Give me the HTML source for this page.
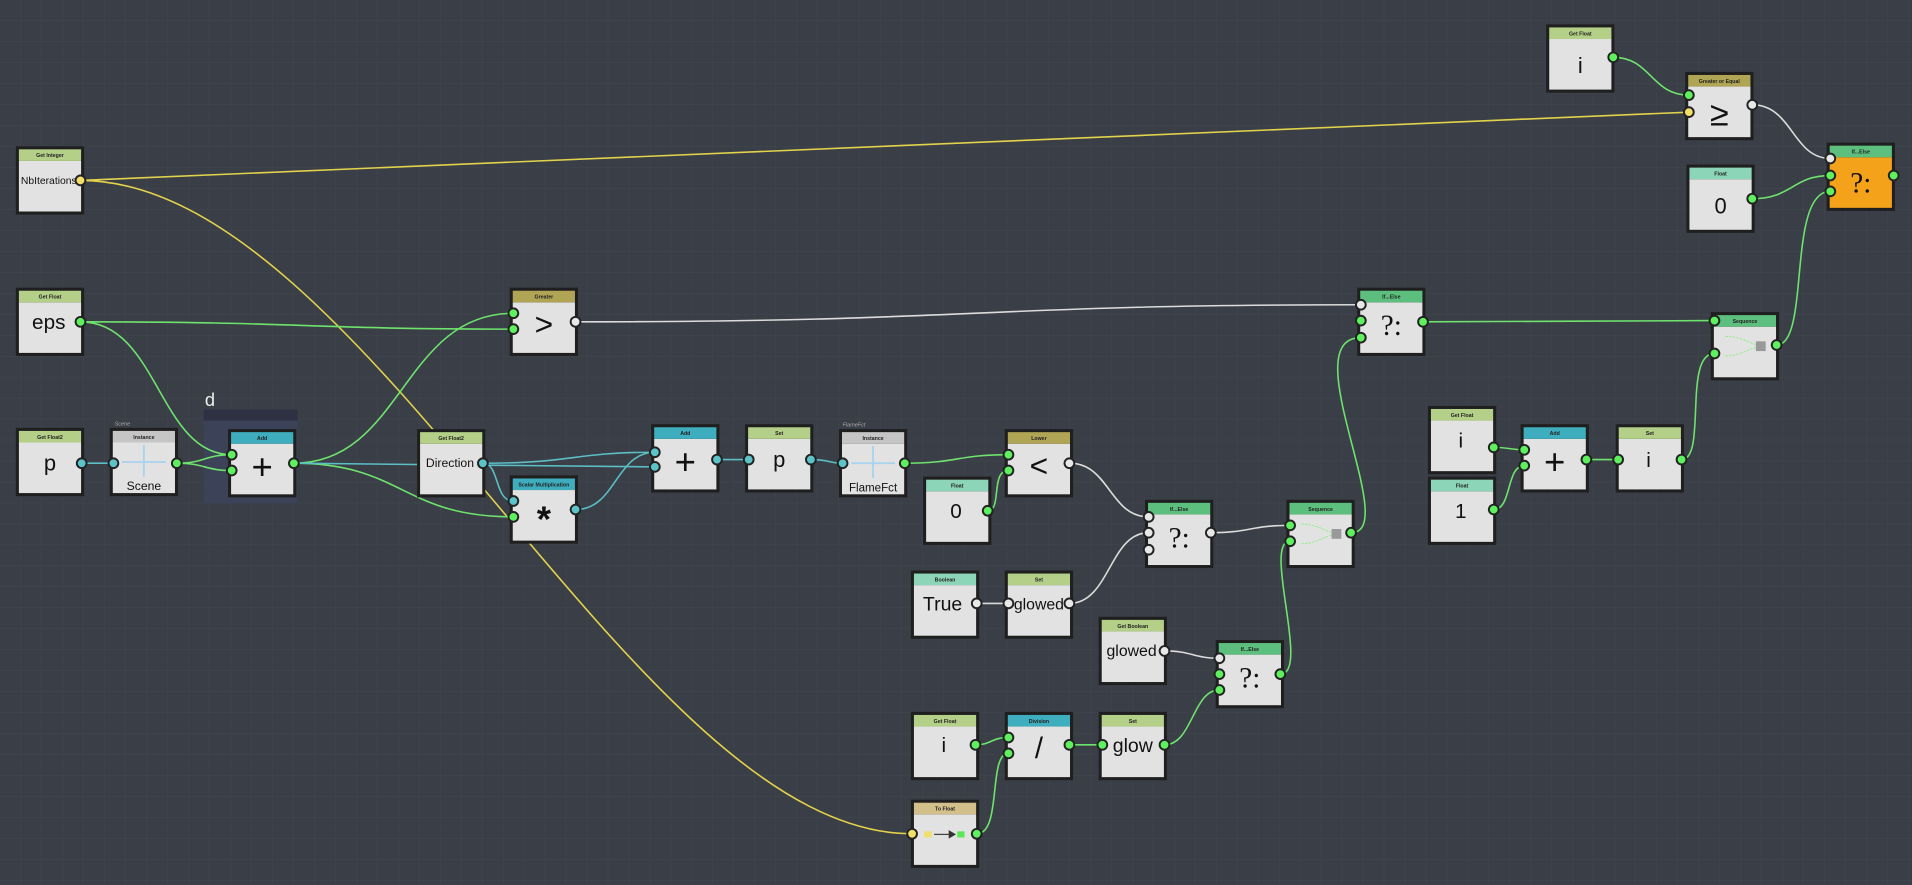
<!DOCTYPE html>
<html><head><meta charset="utf-8"><style>
html,body{margin:0;padding:0;background:#3a3e46;overflow:hidden}
svg{display:block}
.h{font:bold 4.3px "Liberation Sans",sans-serif;fill:#222;text-anchor:middle}
.t{font-family:"Liberation Sans",sans-serif;fill:#111;text-anchor:middle}
.s{font-family:"Liberation Serif",serif;fill:#111;text-anchor:middle}
.w{fill:none;stroke-width:1.3}
.g{stroke:#6ee36e}.y{stroke:#e2d24c}.wh{stroke:#dcdcdc}.tl{stroke:#5cbfc6}
</style></head><body>
<svg width="1912" height="885" viewBox="0 0 1568 726" preserveAspectRatio="none" xmlns="http://www.w3.org/2000/svg">
<defs>
<pattern id="gr" width="17.2" height="17.2" patternUnits="userSpaceOnUse">
<path d="M17.2 0V17.2H0" fill="none" stroke="#42464e" stroke-width="0.8"/>
</pattern>
<g id="n"><rect x="0" y="0" width="56" height="56" fill="#1f1f1f"/><rect x="2.5" y="12" width="51" height="41.5" fill="#e2e2e2"/></g>
</defs>
<rect width="1568" height="726" fill="#3a3e46"/>
<rect width="1568" height="726" fill="url(#gr)"/>

<!-- group d -->
<rect x="167" y="336" width="77" height="77" fill="#3c4258"/>
<rect x="167" y="336" width="77" height="9" fill="#2d3143"/>
<text x="168" y="333" style="font:15px 'Liberation Sans',sans-serif;fill:#eee">d</text>

<!-- wires -->
<path class="w g" d="M1323,47 C1354,47 1354,78 1385,78"/>
<path class="w y" d="M66,148 L1385,92"/>
<path class="w y" d="M66,148 C300,148 520,684 748,684"/>
<path class="w wh" d="M1437,86 C1470,86 1470,130 1501,130"/>
<path class="w g" d="M1437,163 C1470,163 1470,144 1501,144"/>
<path class="w g" d="M1457,283 C1485,283 1465,157 1501,157"/>
<path class="w g" d="M66,264 C250,264 250,270 421,270"/>
<path class="w g" d="M66,264 C130,264 130,373 190,373"/>
<path class="w wh" d="M472,264 C800,264 800,250 1116,250"/>
<path class="w g" d="M1167,264 C1290,264 1290,263 1406,263"/>
<path class="w g" d="M1108,437 C1150,437 1060,277 1116,277"/>
<path class="w g" d="M1379,377 C1400,377 1380,290 1406,290"/>
<path class="w tl" d="M67,380 L93,380"/>
<path class="w g" d="M145,380 C168,380 168,373 190,373"/>
<path class="w g" d="M145,380 C168,380 168,386 190,386"/>
<path class="w g" d="M241,380 C330,380 330,257 421,257"/>
<path class="w g" d="M241,380 C330,380 330,424 421,424"/>
<path class="w tl" d="M241,380 L537,383"/>
<path class="w tl" d="M396,380 C410,380 405,411 421,411"/>
<path class="w tl" d="M396,380 C470,380 470,371 537,371"/>
<path class="w tl" d="M472,418 C505,418 505,371 537,371"/>
<path class="w tl" d="M588,377 L614,377"/>
<path class="w tl" d="M665,377 C680,377 680,380 691,380"/>
<path class="w g" d="M742,380 C785,380 785,373 827,373"/>
<path class="w g" d="M810,419 C822,419 812,386 827,386"/>
<path class="w wh" d="M877,380 C910,380 910,424 942,424"/>
<path class="w wh" d="M877,495 C910,495 910,437 942,437"/>
<path class="w wh" d="M801,495 L827,495"/>
<path class="w wh" d="M993,437 C1025,437 1025,431 1058,431"/>
<path class="w g" d="M1050,553 C1075,553 1035,444 1058,444"/>
<path class="w wh" d="M955,534 C978,534 978,540 1000,540"/>
<path class="w g" d="M955,611 C978,611 978,566 1000,566"/>
<path class="w g" d="M800,611 C813,611 813,605 827,605"/>
<path class="w g" d="M801,684 C822,684 810,618 827,618"/>
<path class="w g" d="M877,611 L904,611"/>
<path class="w g" d="M1225,367 C1238,367 1238,369 1250,369"/>
<path class="w g" d="M1225,418 C1240,418 1235,382 1250,382"/>
<path class="w g" d="M1301,377 L1327,377"/>

<!-- nodes -->
<g transform="translate(1268,20)"><use href="#n"/><rect x="2.5" y="2.5" width="51" height="9.5" fill="#b4cf87"/><text class="h" x="28" y="9">Get Float</text><text class="t" x="28" y="40" font-size="18">i</text></g>
<g transform="translate(1382,59)"><use href="#n"/><rect x="2.5" y="2.5" width="51" height="9.5" fill="#b0a455"/><text class="h" x="28" y="9">Greater or Equal</text><text class="t" x="28" y="44" font-size="28">≥</text></g>
<g transform="translate(1498,117)"><rect width="56" height="56" fill="#1f1f1f"/><rect x="2.5" y="12" width="51" height="41.5" fill="#f5a21b"/><rect x="2.5" y="2.5" width="51" height="9.5" fill="#5dbf7e"/><text class="h" x="28" y="9">If...Else</text><text class="s" x="28" y="41" font-size="24">?:</text></g>
<g transform="translate(1383,135)"><use href="#n"/><rect x="2.5" y="2.5" width="51" height="9.5" fill="#8cd5b8"/><text class="h" x="28" y="9">Float</text><text class="t" x="28" y="40" font-size="18">0</text></g>
<g transform="translate(13,120)"><use href="#n"/><rect x="2.5" y="2.5" width="51" height="9.5" fill="#b4cf87"/><text class="h" x="28" y="9">Get Integer</text><text class="t" x="27" y="31" font-size="8.5">NbIterations</text></g>
<g transform="translate(13,236)"><use href="#n"/><rect x="2.5" y="2.5" width="51" height="9.5" fill="#b4cf87"/><text class="h" x="28" y="9">Get Float</text><text class="t" x="27" y="34" font-size="17">eps</text></g>
<g transform="translate(418,236)"><use href="#n"/><rect x="2.5" y="2.5" width="51" height="9.5" fill="#b0a455"/><text class="h" x="28" y="9">Greater</text><text class="t" x="28" y="39" font-size="26">&gt;</text></g>
<g transform="translate(1113,236)"><use href="#n"/><rect x="2.5" y="2.5" width="51" height="9.5" fill="#5dbf7e"/><text class="h" x="28" y="9">If...Else</text><text class="s" x="28" y="39" font-size="24">?:</text></g>
<g transform="translate(1403,256)"><use href="#n"/><rect x="2.5" y="2.5" width="51" height="9.5" fill="#5dbf7e"/><text class="h" x="28" y="9">Sequence</text><path d="M12,20 C25,20 30,25 38,27 M12,36 C25,36 30,30 38,29" fill="none" stroke="#8fef8f" stroke-width="0.8" stroke-dasharray="2,1"/><rect x="37" y="24" width="8" height="8" fill="#999"/></g>
<g transform="translate(13,351)"><use href="#n"/><rect x="2.5" y="2.5" width="51" height="9.5" fill="#b4cf87"/><text class="h" x="28" y="9">Get Float2</text><text class="t" x="28" y="35" font-size="18">p</text></g>
<g transform="translate(90,351)"><use href="#n"/><rect x="2.5" y="2.5" width="51" height="9.5" fill="#c5c5c5"/><text class="h" x="28" y="9">Instance</text><path d="M28,14 V40 M10,28 H46" stroke="#a9d2ef" stroke-width="1.5"/><text class="t" x="28" y="51" font-size="10">Scene</text><text x="4" y="-2" style="font:italic 4.5px 'Liberation Sans',sans-serif;fill:#aaa">Scene</text></g>
<g transform="translate(187,352)"><use href="#n"/><rect x="2.5" y="2.5" width="51" height="9.5" fill="#3eaebe"/><text class="h" x="28" y="9">Add</text><text class="t" x="28" y="41" font-size="30" style="font-weight:300">+</text></g>
<g transform="translate(342,352)"><use href="#n"/><rect x="2.5" y="2.5" width="51" height="9.5" fill="#b4cf87"/><text class="h" x="28" y="9">Get Float2</text><text class="t" x="27" y="31" font-size="10">Direction</text></g>
<g transform="translate(418,390)"><use href="#n"/><rect x="2.5" y="2.5" width="51" height="9.5" fill="#3eaebe"/><text class="h" x="28" y="9">Scalar Multiplication</text><text class="t" x="28" y="46" font-size="30" font-weight="bold">*</text></g>
<g transform="translate(534,348)"><use href="#n"/><rect x="2.5" y="2.5" width="51" height="9.5" fill="#3eaebe"/><text class="h" x="28" y="9">Add</text><text class="t" x="28" y="41" font-size="30">+</text></g>
<g transform="translate(611,348)"><use href="#n"/><rect x="2.5" y="2.5" width="51" height="9.5" fill="#b4cf87"/><text class="h" x="28" y="9">Set</text><text class="t" x="28" y="35" font-size="18">p</text></g>
<g transform="translate(688,352)"><use href="#n"/><rect x="2.5" y="2.5" width="51" height="9.5" fill="#c5c5c5"/><text class="h" x="28" y="9">Instance</text><path d="M28,14 V40 M10,28 H46" stroke="#a9d2ef" stroke-width="1.5"/><text class="t" x="28" y="51" font-size="9.5">FlameFct</text><text x="3" y="-2" style="font:italic 4.5px 'Liberation Sans',sans-serif;fill:#aaa">FlameFct</text></g>
<g transform="translate(824,352)"><use href="#n"/><rect x="2.5" y="2.5" width="51" height="9.5" fill="#b0a455"/><text class="h" x="28" y="9">Lower</text><text class="t" x="28" y="39" font-size="26">&lt;</text></g>
<g transform="translate(757,391)"><use href="#n"/><rect x="2.5" y="2.5" width="51" height="9.5" fill="#8cd5b8"/><text class="h" x="28" y="9">Float</text><text class="t" x="27" y="34" font-size="17">0</text></g>
<g transform="translate(939,410)"><use href="#n"/><rect x="2.5" y="2.5" width="51" height="9.5" fill="#5dbf7e"/><text class="h" x="28" y="9">If...Else</text><text class="s" x="28" y="39" font-size="24">?:</text></g>
<g transform="translate(1055,410)"><use href="#n"/><rect x="2.5" y="2.5" width="51" height="9.5" fill="#5dbf7e"/><text class="h" x="28" y="9">Sequence</text><path d="M12,20 C25,20 30,25 38,27 M12,36 C25,36 30,30 38,29" fill="none" stroke="#8fef8f" stroke-width="0.8" stroke-dasharray="2,1"/><rect x="37" y="24" width="8" height="8" fill="#999"/></g>
<g transform="translate(747,468)"><use href="#n"/><rect x="2.5" y="2.5" width="51" height="9.5" fill="#8cd5b8"/><text class="h" x="28" y="9">Boolean</text><text class="t" x="26" y="33" font-size="16">True</text></g>
<g transform="translate(824,468)"><use href="#n"/><rect x="2.5" y="2.5" width="51" height="9.5" fill="#b4cf87"/><text class="h" x="28" y="9">Set</text><text class="t" x="28" y="32" font-size="13">glowed</text></g>
<g transform="translate(901,506)"><use href="#n"/><rect x="2.5" y="2.5" width="51" height="9.5" fill="#b4cf87"/><text class="h" x="28" y="9">Get Boolean</text><text class="t" x="27" y="32" font-size="13">glowed</text></g>
<g transform="translate(997,525)"><use href="#n"/><rect x="2.5" y="2.5" width="51" height="9.5" fill="#5dbf7e"/><text class="h" x="28" y="9">If...Else</text><text class="s" x="28" y="39" font-size="24">?:</text></g>
<g transform="translate(747,584)"><use href="#n"/><rect x="2.5" y="2.5" width="51" height="9.5" fill="#b4cf87"/><text class="h" x="28" y="9">Get Float</text><text class="t" x="27" y="33" font-size="17">i</text></g>
<g transform="translate(824,584)"><use href="#n"/><rect x="2.5" y="2.5" width="51" height="9.5" fill="#3eaebe"/><text class="h" x="28" y="9">Division</text><text class="t" x="28" y="38" font-size="24">/</text></g>
<g transform="translate(901,584)"><use href="#n"/><rect x="2.5" y="2.5" width="51" height="9.5" fill="#b4cf87"/><text class="h" x="28" y="9">Set</text><text class="t" x="28" y="33" font-size="16">glow</text></g>
<g transform="translate(747,656)"><use href="#n"/><rect x="2.5" y="2.5" width="51" height="9.5" fill="#d2bf8a"/><text class="h" x="28" y="9">To Float</text><rect x="11" y="26" width="6" height="5" fill="#f1df6a"/><path d="M19,28.5 H32" stroke="#444" stroke-width="1"/><path d="M31,25 L37,28.5 L31,32Z" fill="#333"/><rect x="38" y="26" width="6" height="5" fill="#58e858"/></g>
<g transform="translate(1171,333)"><use href="#n"/><rect x="2.5" y="2.5" width="51" height="9.5" fill="#b4cf87"/><text class="h" x="28" y="9">Get Float</text><text class="t" x="27" y="34" font-size="17">i</text></g>
<g transform="translate(1171,391)"><use href="#n"/><rect x="2.5" y="2.5" width="51" height="9.5" fill="#8cd5b8"/><text class="h" x="28" y="9">Float</text><text class="t" x="27" y="34" font-size="17">1</text></g>
<g transform="translate(1247,348)"><use href="#n"/><rect x="2.5" y="2.5" width="51" height="9.5" fill="#3eaebe"/><text class="h" x="28" y="9">Add</text><text class="t" x="28" y="41" font-size="30">+</text></g>
<g transform="translate(1325,348)"><use href="#n"/><rect x="2.5" y="2.5" width="51" height="9.5" fill="#b4cf87"/><text class="h" x="28" y="9">Set</text><text class="t" x="27" y="35" font-size="17">i</text></g>

<!-- ports -->
<g stroke="#222" stroke-width="1.6">
<g fill="#5ef05e">
<circle cx="1323" cy="47" r="4"/><circle cx="1385" cy="78" r="4"/><circle cx="1437" cy="163" r="4"/><circle cx="1501" cy="144" r="4"/><circle cx="1501" cy="157" r="4"/><circle cx="1553" cy="144" r="4"/>
<circle cx="66" cy="264" r="4"/><circle cx="421" cy="257" r="4"/><circle cx="421" cy="270" r="4"/>
<circle cx="1116" cy="263" r="4"/><circle cx="1116" cy="277" r="4"/><circle cx="1167" cy="264" r="4"/>
<circle cx="1406" cy="263" r="4"/><circle cx="1406" cy="290" r="4"/><circle cx="1457" cy="283" r="4"/>
<circle cx="145" cy="380" r="4"/><circle cx="190" cy="373" r="4"/><circle cx="190" cy="386" r="4"/><circle cx="241" cy="380" r="4"/>
<circle cx="421" cy="424" r="4"/><circle cx="742" cy="380" r="4"/><circle cx="827" cy="373" r="4"/><circle cx="827" cy="386" r="4"/><circle cx="810" cy="419" r="4"/>
<circle cx="1058" cy="431" r="4"/><circle cx="1058" cy="444" r="4"/><circle cx="1108" cy="437" r="4"/>
<circle cx="1000" cy="553" r="4"/><circle cx="1000" cy="566" r="4"/><circle cx="1050" cy="553" r="4"/>
<circle cx="800" cy="611" r="4"/><circle cx="827" cy="605" r="4"/><circle cx="827" cy="618" r="4"/><circle cx="877" cy="611" r="4"/><circle cx="904" cy="611" r="4"/><circle cx="955" cy="611" r="4"/>
<circle cx="801" cy="684" r="4"/>
<circle cx="1225" cy="367" r="4"/><circle cx="1225" cy="418" r="4"/><circle cx="1250" cy="369" r="4"/><circle cx="1250" cy="382" r="4"/><circle cx="1301" cy="377" r="4"/><circle cx="1327" cy="377" r="4"/><circle cx="1379" cy="377" r="4"/>
</g>
<g fill="#f1df6a"><circle cx="1385" cy="92" r="4"/><circle cx="66" cy="148" r="4"/><circle cx="748" cy="684" r="4"/></g>
<g fill="#e8e8e8">
<circle cx="1437" cy="86" r="4"/><circle cx="1501" cy="130" r="4"/><circle cx="472" cy="264" r="4"/><circle cx="1116" cy="250" r="4"/>
<circle cx="877" cy="380" r="4"/><circle cx="942" cy="424" r="4"/><circle cx="942" cy="437" r="4"/><circle cx="942" cy="451" r="4"/><circle cx="993" cy="437" r="4"/>
<circle cx="801" cy="495" r="4"/><circle cx="827" cy="495" r="4"/><circle cx="877" cy="495" r="4"/><circle cx="955" cy="534" r="4"/><circle cx="1000" cy="540" r="4"/>
</g>
<g fill="#5cc4c8">
<circle cx="67" cy="380" r="4"/><circle cx="93" cy="380" r="4"/><circle cx="396" cy="380" r="4"/><circle cx="421" cy="411" r="4"/><circle cx="472" cy="418" r="4"/>
<circle cx="537" cy="371" r="4"/><circle cx="537" cy="383" r="4"/><circle cx="588" cy="377" r="4"/><circle cx="614" cy="377" r="4"/><circle cx="665" cy="377" r="4"/><circle cx="691" cy="380" r="4"/>
</g>
</g>
</svg>
</body></html>
